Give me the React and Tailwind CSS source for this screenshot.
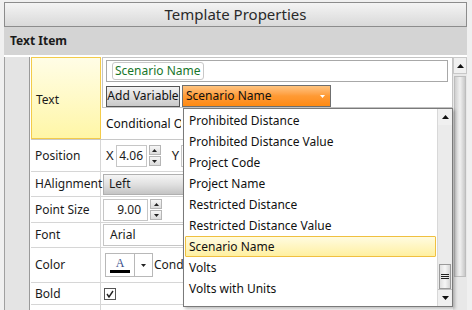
import React from "react";

const font = { fontFamily: '"Noto Sans", "Open Sans", Arial, sans-serif' };

const items = [
  "Prohibited Distance",
  "Prohibited Distance Value",
  "Project Code",
  "Project Name",
  "Restricted Distance",
  "Restricted Distance Value",
  "Scenario Name",
  "Volts",
  "Volts with Units",
];

const Arrow = ({ up }) => (
  <svg width="7" height="4" viewBox="0 0 7 4">
    <path d={up ? "M0 4 L3.5 0 L7 4 Z" : "M0 0 L3.5 4 L7 0 Z"} fill="#111" />
  </svg>
);

const Spin = () => (
  <div className="flex flex-col w-[12px] h-[21px] ml-[2px] gap-[1px]">
    <div className="flex-1 flex items-center justify-center border border-[#b5b5b5] bg-gradient-to-b from-[#f6f6f6] to-[#dcdcdc]">
      <svg width="5" height="3" viewBox="0 0 5 3"><path d="M0 3 L2.5 0 L5 3 Z" fill="#222" /></svg>
    </div>
    <div className="flex-1 flex items-center justify-center border border-[#b5b5b5] bg-gradient-to-b from-[#f6f6f6] to-[#dcdcdc]">
      <svg width="5" height="3" viewBox="0 0 5 3"><path d="M0 0 L2.5 3 L5 0 Z" fill="#222" /></svg>
    </div>
  </div>
);

const Row = ({ label, h, children }) => (
  <div className="flex shrink-0 border-b border-[#d6d6d6]" style={{ height: h }}>
    <div className="w-[70px] shrink-0 flex items-center pl-[4px] border-r border-[#d6d6d6] text-[12px] text-[#1b1b1b]">
      {label}
    </div>
    <div className="flex-1 flex items-center pl-[2px] text-[12px] text-[#1b1b1b]">{children}</div>
  </div>
);

export default function App() {
  return (
    <div className="relative w-[472px] h-[310px] overflow-hidden bg-[#f0f0f0]" style={font}>
      <div className="ml-[4px] mt-[2px] w-[463px] flex flex-col">
        {/* Title */}
        <div className="h-[25px] border border-[#8c8c8c] bg-gradient-to-b from-[#f4f4f4] to-[#d9d9d9] flex items-center justify-center text-[15px] text-[#2a2a2a]">
          Template Properties
        </div>
        {/* Section header */}
        <div className="h-[28px] bg-[#d4d4d4] flex items-center pl-[6px] text-[12px] font-bold text-[#1a1a1a]">
          Text Item
        </div>
        <div className="h-[2px] bg-white" />
        {/* Grid body */}
        <div className="flex h-[260px] overflow-hidden border-l border-[#a0a0a0]">
          <div className="w-[25px] bg-[#e4e4e4] border-r border-[#9a9a9a]" />
          <div className="flex-1 flex flex-col bg-white pl-[1px]">
            {/* Text row */}
            <div className="flex shrink-0 h-[83px] border-b border-[#c8c8c8]">
              <div className="w-[70px] shrink-0 flex items-center pl-[4px] pt-[4px] border border-[#f3cb4a] bg-gradient-to-b from-[#fffde6] to-[#fff6a6] text-[12px] text-[#1b1b1b]">
                Text
              </div>
              <div className="flex-1 flex flex-col pl-[1px]">
                <div className="h-[51px] border border-[#c4c4c4] pt-[2px] pl-[3px] pr-[4px] flex flex-col gap-[3px]">
                  <div className="h-[22px] border border-[#a8a8a8] flex items-center pl-[5px]">
                    <span className="px-[2px] h-[18px] flex items-center border border-[#c8c8c8] rounded-[3px] text-[12px] text-[#17762a] bg-white">
                      Scenario Name
                    </span>
                  </div>
                  <div className="flex items-center gap-[2px]">
                    <div className="h-[21px] w-[74px] flex items-center justify-center border border-[#555] bg-gradient-to-b from-[#f2f2f2] to-[#c9c9c9] text-[12px] text-[#111]">
                      Add Variable
                    </div>
                    <div className="h-[22px] w-[149px] flex items-center justify-between pl-[3px] pr-[5px] border border-[#6f6f6f] bg-gradient-to-b from-[#ffc47f] via-[#ff9a33] to-[#ff8a10] text-[12px] text-[#111]">
                      <span>Scenario Name</span>
                      <svg width="5" height="3" viewBox="0 0 5 3"><path d="M0 0 L2.5 3 L5 0 Z" fill="#fff" /></svg>
                    </div>
                  </div>
                </div>
                <div className="flex-1 flex items-center pl-[4px]">
                  <span className="w-[75px] overflow-hidden whitespace-nowrap text-[12px] text-[#111]">
                    Conditional Options
                  </span>
                </div>
              </div>
            </div>
            <Row label="Position" h={32}>
              <span className="ml-[3px] mr-[2px] text-[13px]">X</span>
              <div className="w-[31px] h-[22px] border border-[#c6c6c6] flex items-center justify-center text-[12px]">4.06</div>
              <Spin />
              <span className="ml-[11px] mr-[2px] text-[13px]">Y</span>
              <div className="w-[31px] h-[22px] border border-[#c6c6c6]" />
            </Row>
            <Row label="HAlignment" h={25}>
              <div className="h-[21px] flex-1 mr-[2px] flex items-center pl-[5px] border border-[#b0b0b0] bg-gradient-to-b from-[#f5f5f5] via-[#e0e0e0] to-[#c4c4c4]">
                Left
              </div>
            </Row>
            <Row label="Point Size" h={26}>
              <div className="w-[45px] h-[22px] border border-[#c6c6c6] flex items-center justify-end pr-[6px]">9.00</div>
              <Spin />
            </Row>
            <Row label="Font" h={25}>
              <div className="h-[22px] flex-1 mr-[2px] flex items-center pl-[6px] border border-[#c6c6c6]">Arial</div>
            </Row>
            <Row label="Color" h={35}>
              <div className="ml-[2px] w-[48px] h-[24px] flex border border-[#b8b8b8] bg-white">
                <div className="w-[29px] flex flex-col items-center justify-center border-r border-[#b8b8b8]">
                  <span className="text-[12px] leading-[12px] text-[#3a4f8a]" style={{ fontFamily: '"Liberation Serif", serif' }}>A</span>
                  <div className="w-[20px] h-[3px] bg-black mt-[1px]" />
                </div>
                <div className="flex-1 flex items-center justify-center">
                  <svg width="5" height="3" viewBox="0 0 5 3"><path d="M0 0 L2.5 3 L5 0 Z" fill="#222" /></svg>
                </div>
              </div>
              <span className="ml-[1px] w-[29px] overflow-hidden whitespace-nowrap text-[12px]">Conditional</span>
            </Row>
            <Row label="Bold" h={22}>
              <div className="ml-[1px] w-[12px] h-[12px] border border-[#555] bg-white flex items-center justify-center">
                <svg width="8" height="8" viewBox="0 0 8 8"><path d="M1 4 L3 7 L7 1" stroke="#222" strokeWidth="1.4" fill="none" /></svg>
              </div>
            </Row>
            <Row label="" h={22} />
          </div>
          {/* Main scrollbar */}
          <div className="w-[14px] bg-[#e8e8e8] flex flex-col">
            <div className="h-[17px] border border-[#c8c8c8] bg-[#f0f0f0] flex items-center justify-center">
              <Arrow up />
            </div>
            <div className="mt-[2px] mx-[1px] h-[201px] border border-[#bdbdbd] bg-gradient-to-r from-[#cfcfcf] via-[#f0f0f0] to-[#c8c8c8]" />
          </div>
        </div>
      </div>

      {/* Dropdown popup */}
      <div className="absolute left-[183px] top-[108px] w-[270px] h-[199px] bg-white border border-[#7a7a7a] shadow-[2px_2px_3px_rgba(0,0,0,0.25)] flex">
        <div className="flex-1 flex flex-col pt-[1px] px-[1px]">
          {items.map((it) => (
            <div
              key={it}
              className={
                it === "Scenario Name"
                  ? "h-[21px] flex items-center pl-[3px] text-[12px] text-[#111] border border-[#f0c040] bg-gradient-to-b from-[#fffbe0] to-[#fff0a0] rounded-[1px]"
                  : "h-[21px] flex items-center pl-[4px] text-[12px] text-[#111]"
              }
            >
              {it}
            </div>
          ))}
        </div>
        <div className="w-[15px] bg-[#ebebeb] border-l border-[#d8d8d8] flex flex-col">
          <div className="h-[16px] flex items-center justify-center bg-[#f0f0f0]">
            <Arrow up />
          </div>
          <div className="flex-1" />
          <div className="h-[25px] mx-[1px] border border-[#9a9a9a] bg-gradient-to-r from-[#e0e0e0] via-[#f6f6f6] to-[#d6d6d6] flex flex-col items-center justify-center gap-[1px]">
            <div className="w-[8px] h-[1px] bg-[#222]" />
            <div className="w-[8px] h-[1px] bg-[#222]" />
            <div className="w-[8px] h-[1px] bg-[#222]" />
          </div>
          <div className="h-[17px] flex items-center justify-center border-t border-[#c0c0c0] bg-[#f0f0f0]">
            <Arrow />
          </div>
        </div>
      </div>
    </div>
  );
}
